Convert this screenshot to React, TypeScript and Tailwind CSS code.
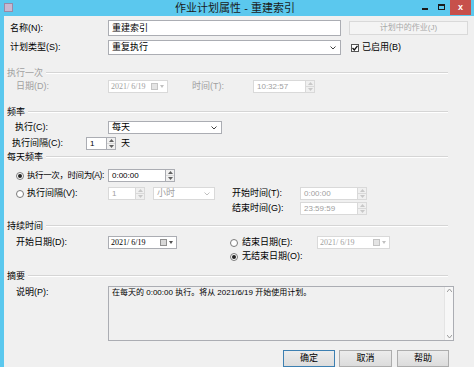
import React from "react";

const font = { fontFamily: '"Liberation Sans", "Noto Sans CJK SC", sans-serif' };

function GroupHeader({ label, disabled }: { label: string; disabled?: boolean }) {
  return (
    <div className="flex items-center h-[10px] pl-[3px] pr-[26px]">
      <span className={`text-[9px] leading-none mr-[3px] whitespace-nowrap ${disabled ? "text-[#a0a0a0]" : "text-black"}`}>{label}</span>
      <div className="flex-1 border-t border-[#d5d5d5] border-b border-b-white" />
    </div>
  );
}

function Spin({ disabled }: { disabled?: boolean }) {
  const c = disabled ? "#c8c8c8" : "#606060";
  return (
    <div className={`w-[9px] h-full flex flex-col border border-l-0 ${disabled ? "border-[#d9d9d9]" : "border-[#abadb3]"} bg-[#f0f0f0]`}>
      <div className="flex-1 flex items-center justify-center border-b border-[#d9d9d9]">
        <svg width="5" height="3" viewBox="0 0 5 3"><path d="M0 3 L2.5 0 L5 3Z" fill={c} /></svg>
      </div>
      <div className="flex-1 flex items-center justify-center">
        <svg width="5" height="3" viewBox="0 0 5 3"><path d="M0 0 L2.5 3 L5 0Z" fill={c} /></svg>
      </div>
    </div>
  );
}

function Box({ w, value, disabled, spin, h = 13 }: { w: number; value: string; disabled?: boolean; spin?: boolean; h?: number }) {
  return (
    <div className="flex shrink-0" style={{ height: h }}>
      <div
        className={`bg-white border flex items-center pl-[3px] text-[8px] leading-none whitespace-nowrap ${disabled ? "border-[#d9d9d9] text-[#a0a0a0]" : "border-[#abadb3] text-black"}`}
        style={{ width: w }}
      >
        {value}
      </div>
      {spin && <Spin disabled={disabled} />}
    </div>
  );
}

function Combo({ w, value, disabled, h = 13 }: { w: number; value: string; disabled?: boolean; h?: number }) {
  return (
    <div
      className={`bg-white border flex items-center justify-between pl-[3px] pr-[4px] text-[9px] leading-none shrink-0 ${disabled ? "border-[#d9d9d9] text-[#a0a0a0]" : "border-[#abadb3] text-black"}`}
      style={{ width: w, height: h }}
    >
      <span>{value}</span>
      <svg width="6" height="4" viewBox="0 0 6 4"><path d="M0.5 0.5 L3 3 L5.5 0.5" stroke={disabled ? "#c0c0c0" : "#404040"} strokeWidth="1" fill="none" /></svg>
    </div>
  );
}

function DateBox({ w, value, disabled }: { w: number; value: string; disabled?: boolean }) {
  return (
    <div
      className={`bg-white border flex items-center justify-between pl-[2px] pr-[3px] text-[8px] leading-none h-[13px] whitespace-nowrap shrink-0 ${disabled ? "border-[#d9d9d9] text-[#a0a0a0]" : "border-[#abadb3] text-black"}`}
      style={{ width: w, fontFamily: '"Liberation Serif", "Noto Sans CJK SC", serif' }}
    >
      <span>{value}</span>
      <span className="flex items-center gap-[2px]">
        <svg width="7" height="7" viewBox="0 0 7 7"><rect x="0.5" y="0.5" width="6" height="6" fill={disabled ? "#e4e4e4" : "#d8d8d8"} stroke={disabled ? "#c4c4c4" : "#909090"} /></svg>
        <svg width="4" height="3" viewBox="0 0 4 3"><path d="M0 0 L2 3 L4 0Z" fill={disabled ? "#c0c0c0" : "#505050"} /></svg>
      </span>
    </div>
  );
}

function Radio({ checked }: { checked?: boolean }) {
  return (
    <div className="w-[8px] h-[8px] shrink-0 rounded-full border border-[#7a7a7a] bg-white flex items-center justify-center">
      {checked && <div className="w-[4px] h-[4px] rounded-full bg-[#222]" />}
    </div>
  );
}

export default function App() {
  return (
    <div className="w-[474px] h-[367px] overflow-hidden bg-[#5bc8ee] text-black" style={font}>
      {/* title bar */}
      <div className="h-[16px] flex items-start relative">
        <div className="ml-[4px] mt-[3px] w-[9px] h-[9px] bg-[#c9b8d0] border border-[#9a8aa6]" />
        <div className="flex-1 text-center text-[11px] leading-[16px] text-[#1a1a1a] pl-[40px]">作业计划属性 - 重建索引</div>
        <div className="flex h-[15px]">
          <div className="w-[15px] h-[14px] flex items-end justify-center pb-[4px] bg-[#5bc8ee]">
            <div className="w-[6px] h-[2px] bg-[#1a1a1a]" />
          </div>
          <div className="w-[16px] h-[14px] flex items-center justify-center bg-[#5bc8ee] ml-[1px]">
            <div className="w-[7px] h-[6px] border border-[#1a1a1a] border-t-2" />
          </div>
          <div className="w-[21px] h-[15px] bg-[#c7504b] flex items-center justify-center text-white text-[9px] font-bold ml-[1px] mr-[3px]">
            x
          </div>
        </div>
      </div>

      {/* body */}
      <div className="ml-[4px] h-[351px] bg-[#f0f0f0] flex flex-col text-[9px] leading-none whitespace-nowrap">
        {/* name */}
        <div className="flex items-center h-[16px] mt-[4px]">
          <div className="w-[104px] shrink-0 pl-[6px]">名称(N):</div>
          <div className="w-[233px] h-[16px] bg-white border border-[#abadb3] flex items-center pl-[3px]">重建索引</div>
          <div className="ml-[8px] w-[119px] h-[14px] border border-[#d9d9d9] bg-[#f4f4f4] flex items-center justify-center text-[8px] text-[#a8a8a8]">
            计划中的作业(J)
          </div>
        </div>

        {/* type */}
        <div className="flex items-center h-[15px] mt-[4px]">
          <div className="w-[104px] shrink-0 pl-[6px]">计划类型(S):</div>
          <Combo w={233} value="重复执行" h={15} />
          <div className="ml-[10px] w-[8px] h-[8px] border border-[#555] bg-white flex items-center justify-center">
            <svg width="6" height="6" viewBox="0 0 6 6"><path d="M0.5 3 L2.3 5 L5.5 0.8" stroke="#111" strokeWidth="1.3" fill="none" /></svg>
          </div>
          <span className="ml-[3px]">已启用(B)</span>
        </div>

        {/* one time */}
        <div className="mt-[13px]">
          <GroupHeader label="执行一次" disabled />
        </div>
        <div className="flex items-center h-[13px] mt-[2px] text-[#a0a0a0]">
          <div className="w-[104px] shrink-0 pl-[12px]">日期(D):</div>
          <DateBox w={60} value="2021/ 6/19" disabled />
          <div className="ml-[24px] w-[61px] shrink-0">时间(T):</div>
          <Box w={53} value="10:32:57" disabled spin />
        </div>

        {/* frequency */}
        <div className="mt-[14px]">
          <GroupHeader label="频率" />
        </div>
        <div className="flex items-center h-[13px] mt-[4px]">
          <div className="w-[104px] shrink-0 pl-[11px]">执行(C):</div>
          <Combo w={114} value="每天" />
        </div>
        <div className="flex items-center h-[13px] mt-[3px]">
          <div className="w-[82px] shrink-0 pl-[8px]">执行间隔(C):</div>
          <Box w={21} value="1" spin />
          <span className="ml-[5px]">天</span>
        </div>

        {/* daily frequency */}
        <div className="mt-[2px]">
          <GroupHeader label="每天频率" />
        </div>
        <div className="flex items-center h-[13px] mt-[7px]">
          <div className="w-[104px] shrink-0 pl-[12px] flex items-center overflow-hidden">
            <Radio checked />
            <span className="ml-[3px] text-[8.5px] tracking-[-0.4px]">执行一次，时间为(A):</span>
          </div>
          <Box w={58} value="0:00:00" spin />
        </div>
        <div className="flex items-center h-[13px] mt-[5px]">
          <div className="w-[104px] shrink-0 pl-[12px] flex items-center">
            <Radio />
            <span className="ml-[3px]">执行间隔(V):</span>
          </div>
          <Box w={28} value="1" disabled spin />
          <div className="ml-[8px]">
            <Combo w={62} value="小时" disabled />
          </div>
          <div className="ml-[17px] w-[68px] shrink-0">开始时间(T):</div>
          <Box w={58} value="0:00:00" disabled spin />
        </div>
        <div className="flex items-center h-[13px] mt-[2px]">
          <div className="w-[228px] shrink-0" />
          <div className="w-[68px] shrink-0">结束时间(G):</div>
          <Box w={58} value="23:59:59" disabled spin />
        </div>

        {/* duration */}
        <div className="mt-[6px]">
          <GroupHeader label="持续时间" />
        </div>
        <div className="flex items-center h-[13px] mt-[5px]">
          <div className="w-[104px] shrink-0 pl-[12px]">开始日期(D):</div>
          <DateBox w={69} value="2021/ 6/19" />
          <div className="ml-[53px] flex items-center w-[87px] shrink-0">
            <Radio />
            <span className="ml-[4px]">结束日期(E):</span>
          </div>
          <DateBox w={73} value="2021/ 6/19" disabled />
        </div>
        <div className="flex items-center h-[13px] mt-[3px]">
          <div className="ml-[226px] flex items-center">
            <Radio checked />
            <span className="ml-[4px]">无结束日期(O):</span>
          </div>
        </div>

        {/* summary */}
        <div className="mt-[10px]">
          <GroupHeader label="摘要" />
        </div>
        <div className="flex items-start mt-[5px]">
          <div className="w-[104px] shrink-0 pl-[12px] pt-[2px]">说明(P):</div>
          <div className="w-[346px] h-[55px] border border-[#abadb3] bg-[#f0f0f0] flex">
            <div className="flex-1 pl-[3px] pt-[2px] text-[8px]">在每天的 0:00:00 执行。将从 2021/6/19 开始使用计划。</div>
            <div className="w-[9px] bg-[#f7f7f7] border-l border-[#e4e4e4] flex flex-col justify-between items-center py-[2px]">
              <svg width="5" height="3" viewBox="0 0 5 3"><path d="M0 3 L2.5 0 L5 3" stroke="#9a9a9a" fill="none" /></svg>
              <svg width="5" height="3" viewBox="0 0 5 3"><path d="M0 0 L2.5 3 L5 0" stroke="#9a9a9a" fill="none" /></svg>
            </div>
          </div>
        </div>

        {/* buttons */}
        <div className="flex justify-end mt-[9px] pr-[25px] gap-[4px]">
          <div className="w-[52px] h-[17px] border border-[#3c7fb1] bg-gradient-to-b from-[#ececec] to-[#dcdcdc] flex items-center justify-center">确定</div>
          <div className="w-[53px] h-[17px] border border-[#adadad] bg-gradient-to-b from-[#ececec] to-[#dcdcdc] flex items-center justify-center">取消</div>
          <div className="ml-[1px] w-[52px] h-[17px] border border-[#adadad] bg-gradient-to-b from-[#ececec] to-[#dcdcdc] flex items-center justify-center">帮助</div>
        </div>
      </div>
    </div>
  );
}
